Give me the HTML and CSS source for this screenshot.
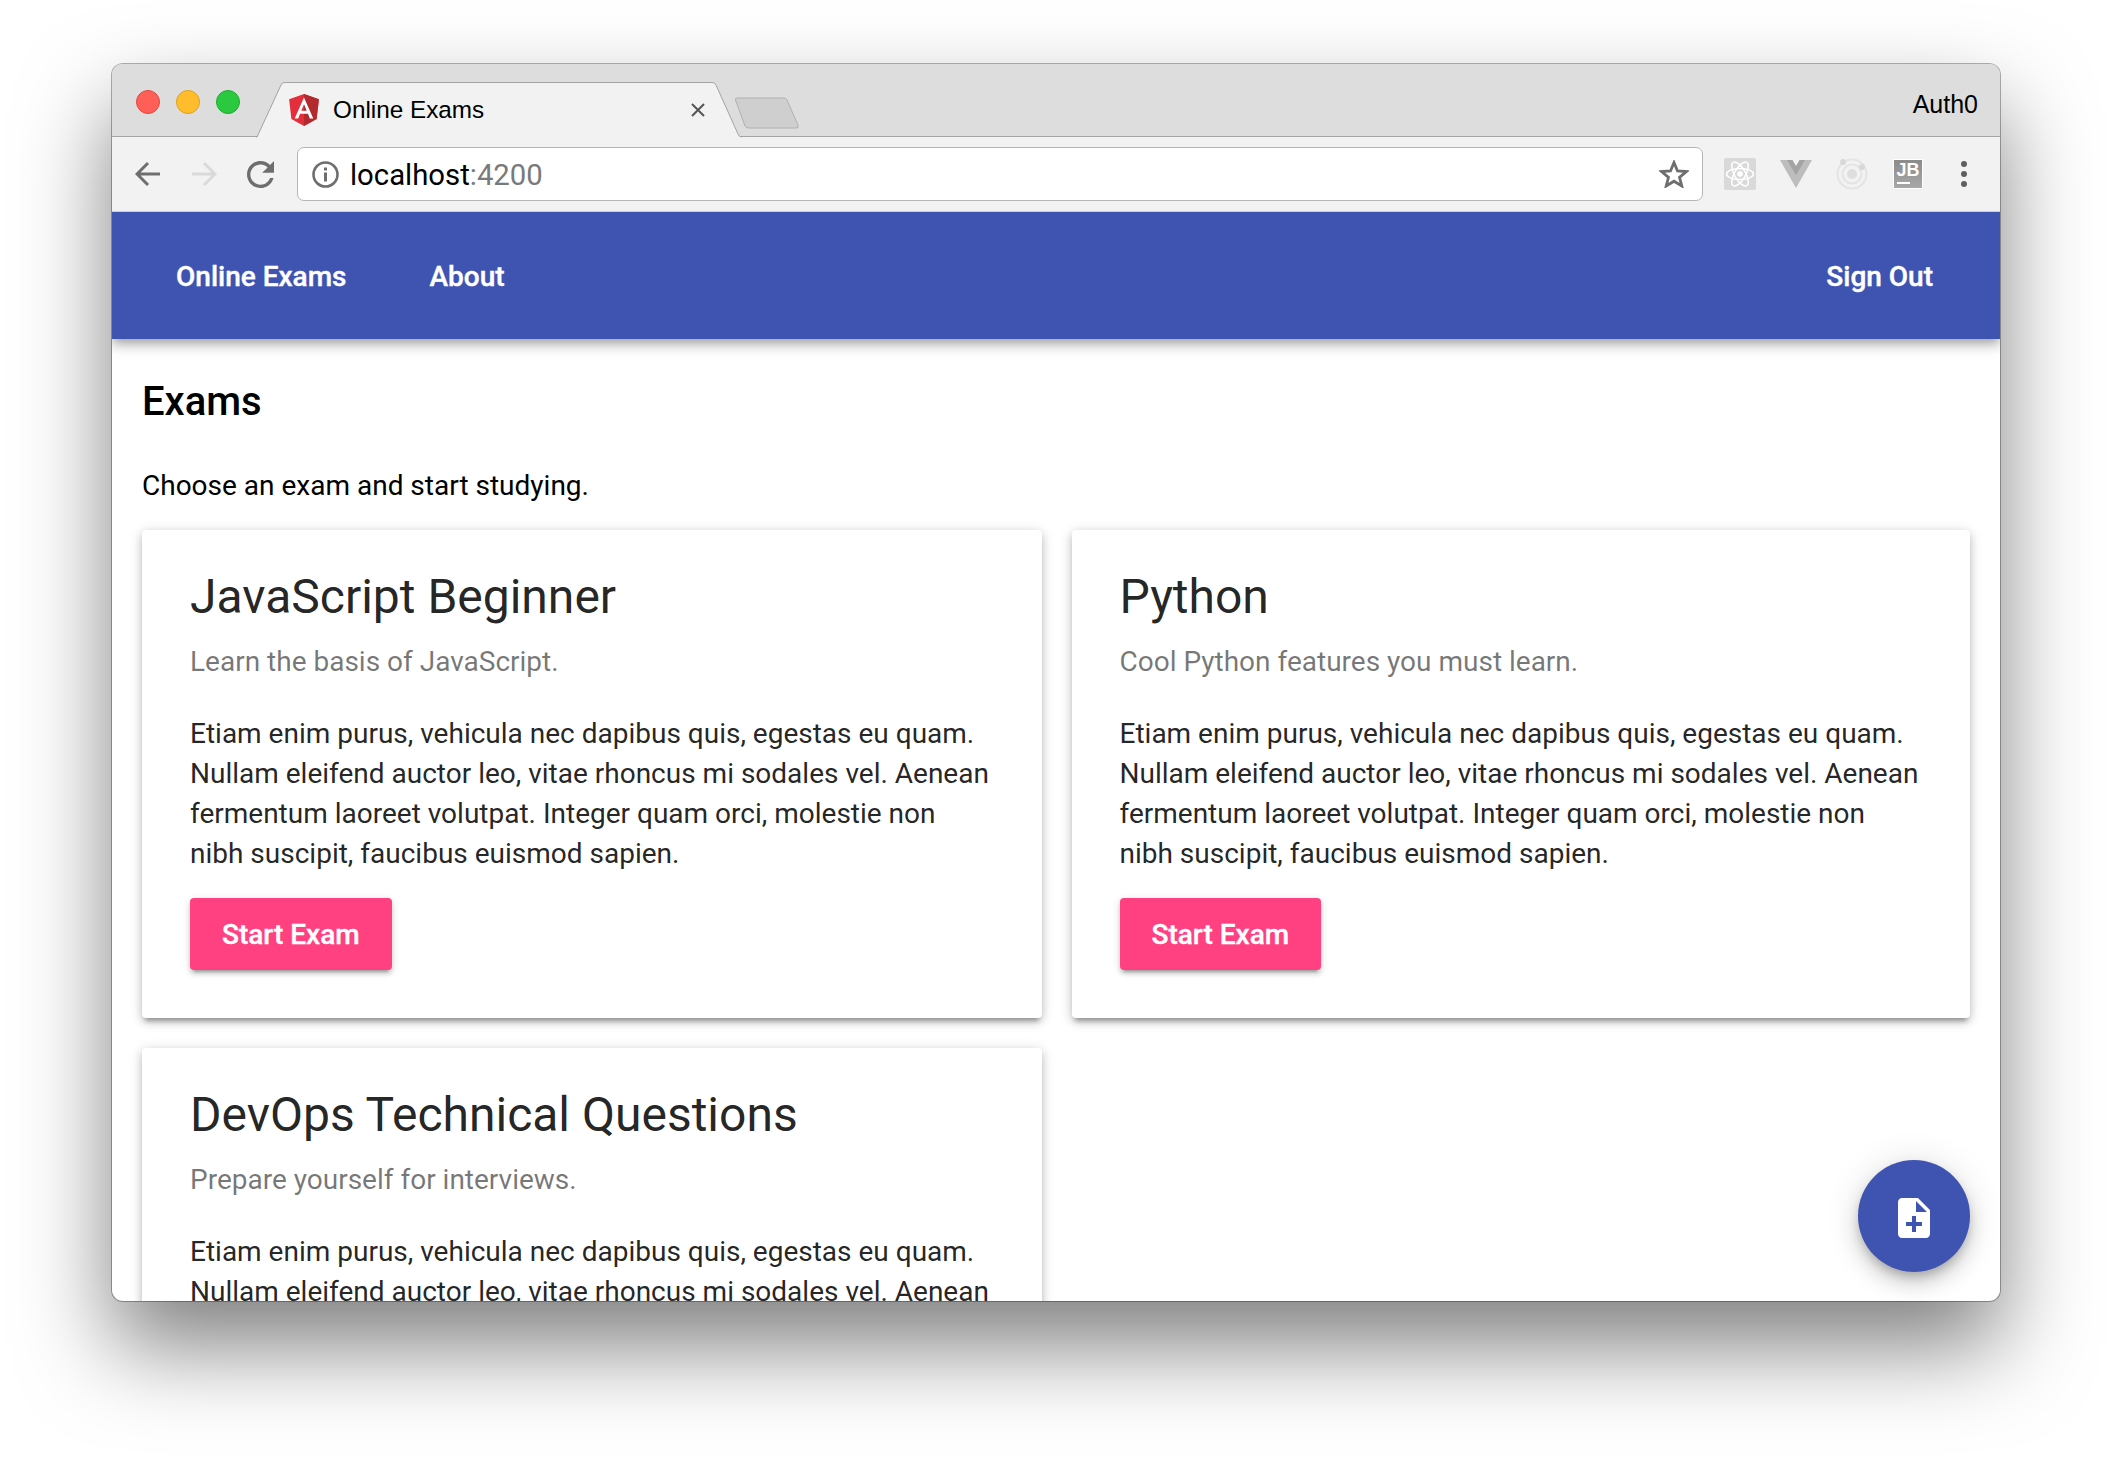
FILE: index.html
```html
<!DOCTYPE html>
<html lang="en">
<head>
<meta charset="utf-8">
<title>Online Exams</title>
<link rel="stylesheet" href="styles.css">
</head>
<body>
<div class="window">
  <div class="tabstrip">
    <div class="lights">
      <span class="light light-red"></span>
      <span class="light light-yellow"></span>
      <span class="light light-green"></span>
    </div>
    <div class="tab">
      <svg class="tab-shape" width="484" height="56" viewBox="0 0 484 56"><path d="M0 55 H1 L25 3 Q26 .5 29 .5 H456 Q459 .5 460 3 L482 52 Q483 55 486 55" fill="#f2f2f2" stroke="#a3a3a3" stroke-width="1"/></svg>
      <svg class="favicon" width="30" height="32" viewBox="31.9 30 186.2 200"><polygon points="125,30 31.9,63.2 46.1,186.3 125,230 203.9,186.3 218.1,63.2" fill="#e22f3b"/><polygon points="125,30 125,230 203.9,186.3 218.1,63.2" fill="#b22a30"/><path d="M125 52.1L66.8 182.6h21.7l11.7-29.2h49.4l11.7 29.2h21.7L125 52.1zM142 135.4h-34l17-40.9 17 40.9z" fill="#fff"/></svg>
      <span class="tab-title">Online Exams</span>
      <svg class="tab-close" width="16" height="14" viewBox="0 0 16 14"><path d="M2 1 L14 13 M14 1 L2 13" stroke="#555" stroke-width="2" fill="none"/></svg>
    </div>
    <svg class="newtab" width="65" height="32" viewBox="0 0 65 32"><path d="M1.500 3 Q1 1 3 1 H50 Q52 1 53 3 L64 28 Q65 31 62 31 H15 Q12 31 11 29 Z" fill="#cfcfcf" stroke="#b0b0b0" stroke-width="1"/></svg>
    <span class="profile">Auth0</span>
  </div>

  <div class="toolbar">
    <svg class="nav-icon" width="26" height="26" viewBox="0 0 26 26"><path d="M25 13 H3 M13 2 L2 13 L13 24" fill="none" stroke="#6e6e6e" stroke-width="3"/></svg>
    <svg class="nav-icon nav-gap" width="26" height="26" viewBox="0 0 26 26"><path d="M1 13 H23 M13 2 L24 13 L13 24" fill="none" stroke="#dadada" stroke-width="3"/></svg>
    <svg class="nav-icon nav-gap-sm" width="27" height="27" viewBox="4 4 16 16"><path d="M17.650 6.350C16.200 4.900 14.210 4 12 4c-4.420 0-7.990 3.580-7.990 8s3.570 8 7.990 8c3.730 0 6.840-2.550 7.730-6h-2.080c-.82 2.330-3.040 4-5.650 4-3.310 0-6-2.690-6-6s2.690-6 6-6c1.660 0 3.140.69 4.220 1.780L13 11h7V4l-2.350 2.350z" fill="#6e6e6e"/></svg>
    <div class="address">
      <svg class="info" width="27" height="27" viewBox="0 0 27 27"><circle cx="13.500" cy="13.500" r="12" fill="none" stroke="#6e6e6e" stroke-width="2.600"/><rect x="12" y="11.500" width="3" height="9" fill="#6e6e6e"/><rect x="12" y="6.500" width="3" height="3" fill="#6e6e6e"/></svg>
      <span class="url">localhost<span class="url-port">:4200</span></span>
      <svg class="star" width="30" height="28" viewBox="0 0 30 28"><polygon points="15,2.500 18.500,11 27.500,11.500 20.500,17.300 22.800,26 15,21.200 7.200,26 9.500,17.300 2.500,11.500 11.500,11" fill="none" stroke="#6e6e6e" stroke-width="2.800" stroke-linejoin="miter"/></svg>
    </div>
    <svg class="ext ext-react" width="32" height="32" viewBox="0 0 32 32"><rect width="32" height="32" rx="2" fill="#d9d9d9"/><g fill="none" stroke="#fff" stroke-width="1.500"><ellipse cx="16" cy="16" rx="13.500" ry="5.500"/><ellipse cx="16" cy="16" rx="13.500" ry="5.500" transform="rotate(60 16 16)"/><ellipse cx="16" cy="16" rx="13.500" ry="5.500" transform="rotate(120 16 16)"/></g><circle cx="16" cy="16" r="2.800" fill="#fff"/></svg>
    <svg class="ext ext-vue" width="32" height="28" viewBox="0 0 32 28"><polygon points="0,0 8,0 16,13 24,0 32,0 16,28" fill="#bdbdbd"/><polygon points="7,0 12.500,0 16,6 19.500,0 25,0 16,15" fill="#a3a3a3"/></svg>
    <svg class="ext ext-ionic" width="32" height="32" viewBox="0 0 32 32"><circle cx="16" cy="16" r="14.500" fill="none" stroke="#e4e4e4" stroke-width="2"/><circle cx="16" cy="16" r="9.500" fill="none" stroke="#e4e4e4" stroke-width="2"/><circle cx="16" cy="16" r="5" fill="#dedede"/><circle cx="7" cy="4" r="3" fill="#d8d8d8"/><circle cx="26" cy="9" r="3" fill="#d8d8d8"/></svg>
    <svg class="ext ext-jb" width="30" height="30" viewBox="0 0 30 30"><defs><linearGradient id="jbfill" x1="0" y1="0" x2="0" y2="1"><stop offset="0" stop-color="#8a8a8a"/><stop offset="1" stop-color="#a8a8a8"/></linearGradient></defs><rect x=".5" y=".5" width="29" height="29" fill="url(#jbfill)" stroke="#fff"/><text x="3.500" y="17" class="jb-text">JB</text><rect x="4" y="23" width="13" height="2" fill="#fff"/></svg>
    <div class="menu-dots"><span class="dot"></span><span class="dot"></span><span class="dot"></span></div>
  </div>

  <div class="viewport">
    <nav class="appbar">
      <a class="nav-link">Online Exams</a>
      <a class="nav-link">About</a>
      <a class="nav-link nav-link-end">Sign Out</a>
    </nav>
    <main class="content">
      <h2 class="page-title">Exams</h2>
      <p class="page-intro">Choose an exam and start studying.</p>
      <div class="card-grid">
        <article class="card">
          <h3 class="card-title">JavaScript Beginner</h3>
          <p class="card-subtitle">Learn the basis of JavaScript.</p>
          <p class="card-text">Etiam enim purus, vehicula nec dapibus quis, egestas eu quam. Nullam eleifend auctor leo, vitae rhoncus mi sodales vel. Aenean fermentum laoreet volutpat. Integer quam orci, molestie non nibh suscipit, faucibus euismod sapien.</p>
          <button class="start-btn">Start Exam</button>
        </article>
        <article class="card">
          <h3 class="card-title">Python</h3>
          <p class="card-subtitle">Cool Python features you must learn.</p>
          <p class="card-text">Etiam enim purus, vehicula nec dapibus quis, egestas eu quam. Nullam eleifend auctor leo, vitae rhoncus mi sodales vel. Aenean fermentum laoreet volutpat. Integer quam orci, molestie non nibh suscipit, faucibus euismod sapien.</p>
          <button class="start-btn">Start Exam</button>
        </article>
        <article class="card">
          <h3 class="card-title">DevOps Technical Questions</h3>
          <p class="card-subtitle">Prepare yourself for interviews.</p>
          <p class="card-text">Etiam enim purus, vehicula nec dapibus quis, egestas eu quam. Nullam eleifend auctor leo, vitae rhoncus mi sodales vel. Aenean fermentum laoreet volutpat. Integer quam orci, molestie non nibh suscipit, faucibus euismod sapien.</p>
          <button class="start-btn">Start Exam</button>
        </article>
      </div>
    </main>
    <button class="fab" aria-label="Add exam">
      <svg width="48" height="48" viewBox="0 0 24 24"><path d="M14 2H6c-1.100 0-1.990.9-1.990 2L4 20c0 1.100.89 2 1.990 2H18c1.100 0 2-.9 2-2V8l-6-6zm2 14h-3v3h-2v-3H8v-2h3v-3h2v3h3v2zm-3-7V3.500L18.500 9H13z" fill="#fff"/></svg>
    </button>
  </div>
</div>
</body>
</html>
```

FILE: styles.css
```css
* { box-sizing: border-box; }
html, body { margin: 0; height: 100%; }
body {
  background: #fff;
  padding: 64px 112px 0;
  font-family: Roboto, sans-serif;
  overflow: hidden;
}
.window {
  width: 1888px;
  height: 1237px;
  border-radius: 11px;
  overflow: hidden;
  display: flex;
  flex-direction: column;
  box-shadow: 0 0 0 1px rgba(0,0,0,.3), 0 45px 90px rgba(0,0,0,.5);
  background: #fff;
}
/* window chrome */
.tabstrip {
  height: 73px;
  flex: none;
  display: flex;
  background: #dddddd;
  border-bottom: 1px solid #a3a3a3;
  padding-left: 24px;
  font-family: "Liberation Sans", Arial, sans-serif;
}
.lights { display: flex; gap: 16px; margin-top: 26px; height: 24px; }
.light { width: 24px; height: 24px; border-radius: 50%; border: 1px solid; }
.light-red { background: #ff5f57; border-color: #e2463f; }
.light-yellow { background: #ffbd2e; border-color: #e1a116; }
.light-green { background: #2ac940; border-color: #1dad2b; }
.tab {
  position: relative;
  width: 484px;
  height: 56px;
  margin: 18px 0 0 16px;
  padding-left: 33px;
  display: flex;
  align-items: center;
  flex: none;
  z-index: 1;
}
.tab-shape { position: absolute; left: 0; top: 0; overflow: visible; }
.favicon { position: relative; flex: none; }
.tab-title {
  position: relative;
  margin: -1px 0 0 14px;
  font-size: 24.300px;
  color: #000;
  white-space: nowrap;
}
.tab-close { position: relative; margin: 0 34px 0 auto; }
.newtab { margin: 33px 0 0 -6px; flex: none; }
.profile {
  margin: 24px 22px 0 auto;
  font-size: 25px;
  line-height: 32px;
  color: #000;
}
.toolbar {
  height: 75px;
  flex: none;
  display: flex;
  align-items: center;
  background: #f2f2f2;
  border-bottom: 1px solid #cfcfcf;
  padding-left: 23px;
}
.nav-icon { flex: none; }
.nav-gap { margin-left: 30px; }
.nav-gap-sm { margin-left: 30px; }
.address {
  width: 1406px;
  height: 54px;
  margin-left: 23px;
  display: flex;
  align-items: center;
  padding: 0 13px 0 14px;
  background: #fff;
  border: 1px solid #b5b5b5;
  border-radius: 7px;
  flex: none;
}
.info { flex: none; }
.url {
  margin: 2px 0 0 11px;
  font-family: Roboto, sans-serif;
  font-size: 29.300px;
  color: #000;
}
.url-port { color: #7a7a7a; }
.star { margin-left: auto; flex: none; }
.ext { flex: none; }
.ext-react { margin-left: 21px; }
.ext-vue { margin-left: 24px; }
.ext-ionic { margin-left: 24px; }
.ext-jb { margin-left: 25px; }
.jb-text { font-family: "Liberation Sans", Arial, sans-serif; font-weight: 700; font-size: 18px; fill: #fff; }
.menu-dots { margin-left: 38px; display: flex; flex-direction: column; gap: 4px; }
.dot { width: 6px; height: 6px; border-radius: 50%; background: #5f5f5f; }
/* page */
.viewport { position: relative; flex: 1; min-height: 0; overflow: hidden; }
.appbar {
  position: relative;
  z-index: 2;
  height: 127px;
  display: flex;
  align-items: center;
  padding: 2px 35px 0 32px;
  gap: 19px;
  background: #3f54b1;
  box-shadow: 0 4px 8px -2px rgba(0,0,0,.2), 0 8px 10px 0 rgba(0,0,0,.14), 0 2px 20px 0 rgba(0,0,0,.12);
}
.nav-link {
  padding: 0 32px;
  font-size: 28px;
  font-weight: 500;
  color: #fff;
  -webkit-text-stroke: .4px #fff;
}
.nav-link-end { margin-left: auto; }
.content { padding: 39px 30px 0; }
.page-title { margin: 0; font-size: 40px; line-height: 48px; font-weight: 500; color: #000; }
.page-intro { margin: 40px 0 24px; font-size: 28px; line-height: 40px; color: #000; }
.card-grid { display: grid; grid-template-columns: 899.500px 1fr; gap: 30px; }
.card {
  padding: 39px 48px 48px;
  background: #fff;
  border-radius: 4px;
  box-shadow: 0 6px 4px -3px rgba(0,0,0,.25), 0 4px 8px 0 rgba(0,0,0,.16), 0 2px 14px 0 rgba(0,0,0,.14);
}
.card-title { margin: 0; font-size: 48px; line-height: 56px; font-weight: 400; color: rgba(0,0,0,.87); }
.card-subtitle { margin: 17px 0 32px; font-size: 28px; line-height: 40px; color: rgba(0,0,0,.54); }
.card-text { margin: 0 0 24px; font-size: 28px; line-height: 40px; color: rgba(0,0,0,.87); }
.start-btn {
  display: block;
  height: 72px;
  padding: 0 32px;
  border: 0;
  border-radius: 4px;
  background: #ff4081;
  color: #fff;
  font-family: Roboto, sans-serif;
  font-size: 28px;
  font-weight: 500;
  -webkit-text-stroke: .4px #fff;
  box-shadow: 0 6px 2px -4px rgba(0,0,0,.2), 0 4px 4px 0 rgba(0,0,0,.14), 0 2px 10px 0 rgba(0,0,0,.12);
}
.fab {
  position: absolute;
  right: 30px;
  bottom: 29px;
  width: 112px;
  height: 112px;
  padding: 4px 0 0;
  border: 0;
  border-radius: 50%;
  background: #3f54b1;
  display: flex;
  align-items: center;
  justify-content: center;
  z-index: 3;
  box-shadow: 0 6px 10px -2px rgba(0,0,0,.2), 0 12px 20px 0 rgba(0,0,0,.14), 0 2px 36px 0 rgba(0,0,0,.12);
}
```
